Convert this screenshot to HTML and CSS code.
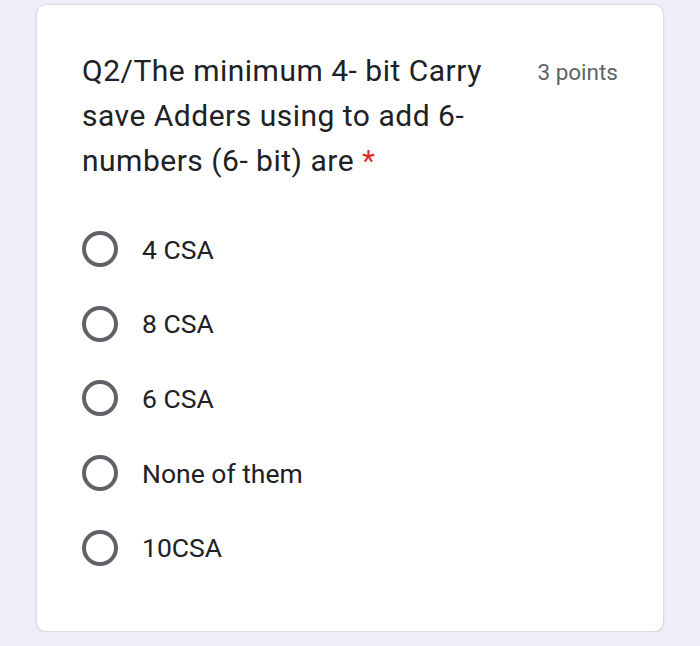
FILE: index.html
```html
<!DOCTYPE html>
<html>
<head>
<meta charset="utf-8">
<link rel="stylesheet" href="styles.css">
</head>
<body>
<div class="card">
  <div class="header">
    <div class="title">Q2/The minimum 4- bit Carry save Adders using to add 6- numbers (6- bit) are <span class="req">*</span></div>
    <div class="points">3 points</div>
  </div>
  <div class="options">
    <div class="option"><span class="radio"></span><span class="label">4 CSA</span></div>
    <div class="option"><span class="radio"></span><span class="label">8 CSA</span></div>
    <div class="option"><span class="radio"></span><span class="label">6 CSA</span></div>
    <div class="option"><span class="radio"></span><span class="label">None of them</span></div>
    <div class="option"><span class="radio"></span><span class="label">10CSA</span></div>
  </div>
</div>
</body>
</html>
```
FILE: styles.css
```css
html, body {
  margin: 0;
  padding: 0;
  background: #efedf7;
}
body {
  padding: 4px 36px 0 36px;
  font-family: Roboto, "Liberation Sans", sans-serif;
}
.card {
  box-sizing: border-box;
  width: 628px;
  height: 628px;
  background: #ffffff;
  border: 1px solid #dadce0;
  border-radius: 10px;
  box-shadow: 0 1px 2px rgba(60, 64, 67, 0.12);
  padding: 43px 45px 0 45px;
}
.header {
  display: flex;
  justify-content: space-between;
  align-items: flex-start;
}
.title {
  width: 420px;
  font-size: 30px;
  line-height: 45px;
  color: #202124;
  letter-spacing: 0.5px;
}
.req {
  color: #d93025;
  letter-spacing: 0;
}
.points {
  font-size: 22.5px;
  color: #5f6368;
  line-height: 45px;
  padding-top: 2px;
}
.options {
  margin-top: 29px;
  display: flex;
  flex-direction: column;
}
.option {
  display: flex;
  align-items: center;
  height: 74.6px;
}
.radio {
  box-sizing: border-box;
  width: 36px;
  height: 36px;
  border: 4px solid #5f6368;
  border-radius: 50%;
  flex: none;
}
.label {
  margin-left: 24px;
  font-size: 26.5px;
  color: #202124;
}
```
